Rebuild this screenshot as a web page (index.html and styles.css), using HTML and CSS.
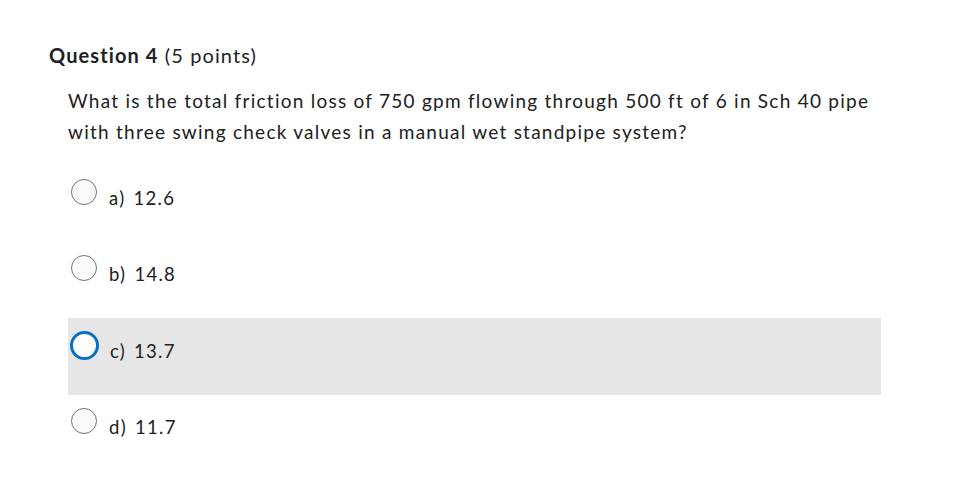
FILE: index.html
```html
<!DOCTYPE html>
<html>
<head>
<meta charset="utf-8">
<link rel="stylesheet" href="styles.css">
</head>
<body>
<div class="question">
  <h2 class="q-title"><strong>Question 4</strong> <span class="pts">(5 points)</span></h2>
  <p class="q-text">What is the total friction loss of 750 gpm flowing through 500 ft of 6 in Sch 40 pipe with three swing check valves in a manual wet standpipe system?</p>
  <div class="options">
    <div class="opt"><span class="radio"></span><span class="lbl">a)</span><span class="val">12.6</span></div>
    <div class="opt"><span class="radio"></span><span class="lbl">b)</span><span class="val">14.8</span></div>
    <div class="opt hover"><span class="radio focus"></span><span class="lbl">c)</span><span class="val">13.7</span></div>
    <div class="opt"><span class="radio"></span><span class="lbl">d)</span><span class="val">11.7</span></div>
  </div>
</div>
</body>
</html>
```
FILE: styles.css
```css
html, body { margin: 0; padding: 0; background: #fff; }
body { font-family: Lato, "Open Sans", sans-serif; color: #202122; font-variant-ligatures: none; }
.question { padding: 41px 0 0 49px; width: 832px; }
.q-title { margin: 0; font-size: 20px; font-weight: 400; line-height: 28px; letter-spacing: 1.1px; }
.q-title strong { font-weight: 700; }
.q-text { margin: 16px 0 0 19px; font-size: 19px; line-height: 31px; width: 812px; letter-spacing: 1.25px; }
.options { margin: 19px 0 0 19px; display: flex; flex-direction: column; }
.opt { height: 76px; display: flex; align-items: flex-start; padding-top: 13px; box-sizing: border-box; font-size: 18.5px; letter-spacing: 1.3px; }
.opt.hover { background: #e6e6e6; height: 77px; }
.radio { width: 24px; height: 24px; border: 1px solid #6f7378; border-radius: 50%; background: #f9fafc; margin-left: 3px; flex: none; }
.radio.focus { width: 23px; height: 23px; border: 3px solid #0770bf; background: #fff; margin-left: 2px; }
.lbl { margin-left: 12px; margin-top: 6px; line-height: 26px; }
.val { margin-left: 8px; margin-top: 6px; line-height: 26px; }
.hover .lbl { margin-left: 11px; }
.hover .lbl, .hover .val { margin-top: 7px; }
```
